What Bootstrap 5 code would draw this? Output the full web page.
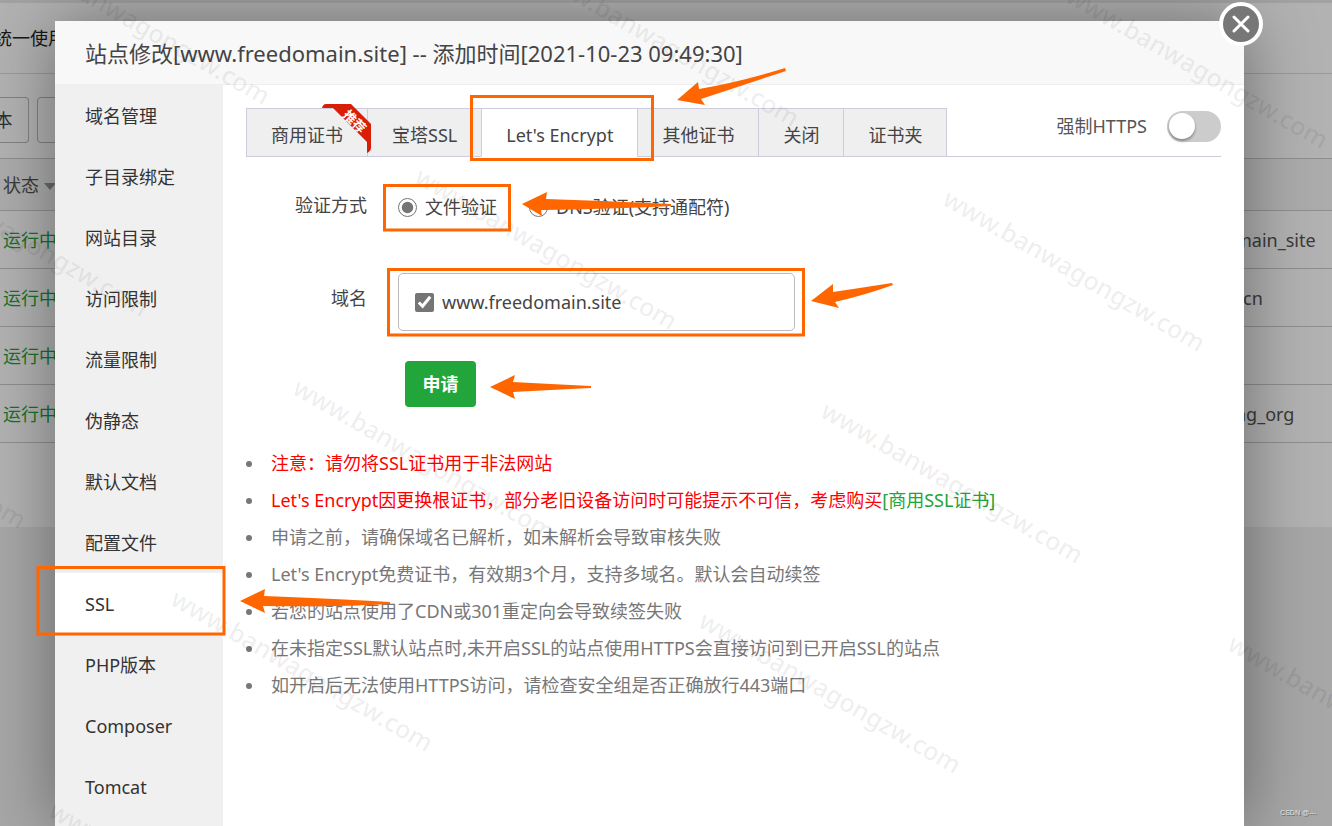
<!DOCTYPE html>
<html lang="zh-CN">
<head>
<meta charset="utf-8">
<meta name="viewport" content="width=device-width, initial-scale=1">
<title>站点修改</title>
<link href="https://cdn.jsdelivr.net/npm/bootstrap@5.3.0/dist/css/bootstrap.min.css" rel="stylesheet">
<style>
  body { font-family: "Noto Sans", "Noto Sans CJK SC", sans-serif; font-size: 18px; line-height: 26px; color: #555; background: #f0f0f0; }
  /* page behind the dialog */
  .site-page { background: #fff; height: 527px; }
  .tip-bar { height: 74px; border-top: 3px solid #e8e8e8; border-bottom: 1px solid #ddd; color: #222; text-indent: -6px; }
  .tool-bar { height: 84px; padding-top: 23px; gap: 8px; }
  .tool-btn { height: 46px; border: 1px solid #bbb; border-radius: 4px; background: #fff; color: #444; padding: 0 15px 0 0; }
  .tool-btn.next { width: 60px; padding: 0 0 0 15px; color: #f0ad4e; }
  .tool-btn.first { width: 29px; text-indent: -6px; border-left: 0; border-radius: 0 4px 4px 0; }
  .site-table { table-layout: fixed; border-top: 1px solid #ccc; color: #555; }
  .site-table th, .site-table td { height: 58px; padding: 0 0 0 3px; border-bottom: 1px solid #ccc; vertical-align: middle; font-weight: 400; white-space: nowrap; }
  .site-table th { height: 52px; background: #f6f6f6; }
  .site-table th:first-child { width: 1232px; }
  .run { color: #20a53a; text-decoration: none; }
  .shade { background: rgba(0,0,0,.3); }
  /* dialog */
  .site-dialog { margin: 21px 88px 0 55px; background: #fff; box-shadow: 1px 1px 65px rgba(0,0,0,.4); }
  .dialog-title { height: 64px; padding: 0 30px; background: #f8f8f8; border-bottom: 1px solid #eee; font-size: 22px; color: #444; }
  .dialog-close { top: -19px; right: -19px; width: 44px; height: 44px; padding: 0; border: 4px solid #fff; border-radius: 50%; background: #777; }
  .side-menu { width: 168px; background: #f0f0f0; }
  .side-menu a { height: 61px; padding-left: 30px; color: #333; text-decoration: none; }
  .side-menu a.active { background: #fff; }
  .pane { padding: 23px 23px 0; }
  .tab-line { border-bottom: 1px solid #ccccdc; height: 49px; }
  .cert-tab { height: 49px; padding: 4px 24px 0; border: 1px solid #ccccdc; border-right-width: 0; background: #efefef; color: #444; white-space: nowrap; }
  .cert-tab:last-child { border-right-width: 1px; }
  .cert-tab.active { background: #fff; border-bottom-color: #fff; }
  .ribbon { top: -5px; right: -5px; z-index: 1; }
  .switch { appearance: none; width: 54px; height: 31px; margin: 0; border-radius: 16px; background: #ccc; padding: 2px; }
  .switch::before { content: ""; display: block; width: 26px; height: 26px; border-radius: 50%; background: #fff; box-shadow: 0 2px 3px rgba(0,0,0,.35); }
  .form-name { width: 121px; margin-right: 31px; text-align: right; color: #444; }
  .pick { accent-color: #757575; width: 19px; height: 19px; margin: 0; flex: none; }
  .way-row { margin-top: 27px; height: 46px; color: #444; }
  .domain-row { margin-top: 43px; }
  .domain-box { width: 397px; height: 58px; padding: 0 16px; border: 1px solid #bbb; border-radius: 5px; color: #444; }
  .send-row { margin-top: 30px; padding-left: 159px; }
  .send-btn { width: 71px; height: 46px; padding: 0; border: 0; border-radius: 4px; background: #22a53a; color: #fff; font-size: 18px; font-weight: 700; }
  .notes { margin: 38px 0 0; padding: 0; list-style: none; color: #777; line-height: 37px; }
  .notes li { display: flex; align-items: center; gap: 19px; white-space: nowrap; }
  .notes li::before { content: ""; width: 6px; height: 6px; border-radius: 50%; background: #777; }
  .warn { color: #f00; }
  /* overlays */
  .marks { width: 1332px; height: 826px; pointer-events: none; }
  .water { font: 500 25px "Noto Sans", sans-serif; fill: #000; fill-opacity: .08; }
  .credit { right: 16px; bottom: 5px; font: 7px/16px "Liberation Sans", sans-serif; color: #e4e4e4; text-shadow: 1px 1px 0 #666; }
</style>
</head>
<body>
<div class="position-relative vh-100 overflow-hidden">
  <div class="site-page">
    <div class="tip-bar d-flex align-items-center">统一使用</div>
    <div class="tool-bar d-flex">
      <button type="button" class="tool-btn first">本</button>
      <button type="button" class="tool-btn next">分</button>
    </div>
    <table class="site-table w-100">
      <thead><tr><th scope="col">状态 <svg width="12" height="7" viewBox="0 0 12 7" aria-hidden="true"><path d="M0 0h12L6 7z" fill="#999"/></svg></th><th scope="col"></th></tr></thead>
      <tbody>
        <tr><td><a class="run" href="#">运行中</a></td><td>main_site</td></tr>
        <tr><td><a class="run" href="#">运行中</a></td><td>_cn</td></tr>
        <tr><td><a class="run" href="#">运行中</a></td><td></td></tr>
        <tr><td><a class="run" href="#">运行中</a></td><td>ng_org</td></tr>
      </tbody>
    </table>
  </div>

  <div class="shade position-absolute top-0 start-0 w-100 h-100 d-flex">
    <section class="site-dialog position-relative flex-grow-1 d-flex flex-column" role="dialog" aria-labelledby="dialog-title">
      <div class="dialog-title d-flex align-items-center" id="dialog-title">站点修改[www.freedomain.site] -- 添加时间[2021-10-23 09:49:30]</div>
      <button type="button" class="dialog-close position-absolute d-flex align-items-center justify-content-center" aria-label="关闭">
        <svg width="18" height="18" viewBox="0 0 18 18"><path d="M2 2l14 14M16 2L2 16" stroke="#fff" stroke-width="3" stroke-linecap="round"/></svg>
      </button>
      <div class="d-flex flex-grow-1">
        <nav class="side-menu d-flex flex-column flex-shrink-0">
          <a class="d-flex align-items-center" href="#">域名管理</a>
          <a class="d-flex align-items-center" href="#">子目录绑定</a>
          <a class="d-flex align-items-center" href="#">网站目录</a>
          <a class="d-flex align-items-center" href="#">访问限制</a>
          <a class="d-flex align-items-center" href="#">流量限制</a>
          <a class="d-flex align-items-center" href="#">伪静态</a>
          <a class="d-flex align-items-center" href="#">默认文档</a>
          <a class="d-flex align-items-center" href="#">配置文件</a>
          <a class="d-flex align-items-center active" href="#">SSL</a>
          <a class="d-flex align-items-center" href="#">PHP版本</a>
          <a class="d-flex align-items-center" href="#">Composer</a>
          <a class="d-flex align-items-center" href="#">Tomcat</a>
        </nav>
        <div class="pane flex-grow-1">
          <div class="tab-line d-flex justify-content-between">
            <div class="d-flex" role="tablist">
              <button type="button" role="tab" class="cert-tab position-relative">商用证书
                <svg class="ribbon position-absolute" width="50" height="50" viewBox="0 0 50 50"><path d="M0 4Q1 0 4 0H29L49 20V44Q49 47 45 49V38L11 4z" fill="#d81e06"/><text transform="translate(32 18) rotate(45)" text-anchor="middle" y="4" font-size="13" font-weight="700" fill="#fff">推荐</text></svg>
              </button>
              <button type="button" role="tab" class="cert-tab">宝塔SSL</button>
              <button type="button" role="tab" class="cert-tab active" aria-selected="true">Let's Encrypt</button>
              <button type="button" role="tab" class="cert-tab">其他证书</button>
              <button type="button" role="tab" class="cert-tab">关闭</button>
              <button type="button" role="tab" class="cert-tab">证书夹</button>
            </div>
            <div class="d-flex align-items-center pb-2 mb-1">
              <label for="force" class="me-3 pe-1">强制HTTPS</label>
              <input type="checkbox" role="switch" class="switch" id="force">
            </div>
          </div>
          <div class="way-row d-flex align-items-center">
            <div class="form-name pb-1">验证方式</div>
            <input type="radio" class="pick" name="way" id="way-file" checked>
            <label for="way-file" class="ps-2 me-4">文件验证</label>
            <input type="radio" class="pick ms-2" name="way" id="way-dns">
            <label for="way-dns" class="ps-2">DNS验证(支持通配符)</label>
          </div>
          <div class="domain-row d-flex align-items-center">
            <div class="form-name pb-2">域名</div>
            <div class="domain-box d-flex align-items-center">
              <input type="checkbox" class="pick" id="domain" checked>
              <label for="domain" class="ps-2">www.freedomain.site</label>
            </div>
          </div>
          <div class="send-row"><button type="button" class="send-btn d-block">申请</button></div>
          <ul class="notes">
            <li><span class="warn">注意：请勿将SSL证书用于非法网站</span></li>
            <li><span class="warn">Let's Encrypt因更换根证书，部分老旧设备访问时可能提示不可信，考虑购买<a class="run" href="#">[商用SSL证书]</a></span></li>
            <li>申请之前，请确保域名已解析，如未解析会导致审核失败</li>
            <li>Let's Encrypt免费证书，有效期3个月，支持多域名。默认会自动续签</li>
            <li>若您的站点使用了CDN或301重定向会导致续签失败</li>
            <li>在未指定SSL默认站点时,未开启SSL的站点使用HTTPS会直接访问到已开启SSL的站点</li>
            <li>如开启后无法使用HTTPS访问，请检查安全组是否正确放行443端口</li>
          </ul>
        </div>
      </div>
    </section>
  </div>

  <svg class="marks position-absolute top-0 start-0" viewBox="0 0 1332 826">
    <g class="water">
      <text transform="translate(6 -43) rotate(30)">www.banwagongzw.com</text>
      <text transform="translate(535 -21) rotate(30)">www.banwagongzw.com</text>
      <text transform="translate(1064 1) rotate(30)">www.banwagongzw.com</text>
      <text transform="translate(-116 169) rotate(30)">www.banwagongzw.com</text>
      <text transform="translate(413 182) rotate(30)">www.banwagongzw.com</text>
      <text transform="translate(941 204) rotate(30)">www.banwagongzw.com</text>
      <text transform="translate(-238 381) rotate(30)">www.banwagongzw.com</text>
      <text transform="translate(291 393) rotate(30)">www.banwagongzw.com</text>
      <text transform="translate(819 416) rotate(30)">www.banwagongzw.com</text>
      <text transform="translate(169 604) rotate(30)">www.banwagongzw.com</text>
      <text transform="translate(697 626) rotate(30)">www.banwagongzw.com</text>
      <text transform="translate(1226 649) rotate(30)">www.banwagongzw.com</text>
      <text transform="translate(47 816) rotate(30)">www.banwagongzw.com</text>
    </g>
    <g fill="none" stroke="#f60" stroke-width="3">
      <path d="M471.500 96.500H652.500V159.500H471.500z"/>
      <path d="M384.500 185.500H509.500V230H384.500z"/>
      <path d="M388.500 269.500H803.500V335H388.500z"/>
      <path d="M38 567.500H224V634H38z"/>
    </g>
    <g fill="#f60">
      <path d="M677 100L698 82L699 89Q740 82 785 68L786 71Q740 86 701 99L705 105z"/>
      <path d="M522 204L547 192L546 199Q610 201 671 204V206Q610 209 541 210L542 216z"/>
      <path d="M811 301L833 284V292Q860 288 892 283L893 285Q865 295 835 302L839 308z"/>
      <path d="M490 387L515 375L513 382Q550 384 591 386V388Q550 390 513 392L515 399z"/>
      <path d="M240 601L265 589L264 596Q340 599 390 602V604Q340 607 263 606L265 613z"/>
    </g>
  </svg>
  <div class="credit position-absolute">CSDN @---</div>
</div>
<script src="https://cdn.jsdelivr.net/npm/bootstrap@5.3.0/dist/js/bootstrap.bundle.min.js"></script>
</body>
</html>
